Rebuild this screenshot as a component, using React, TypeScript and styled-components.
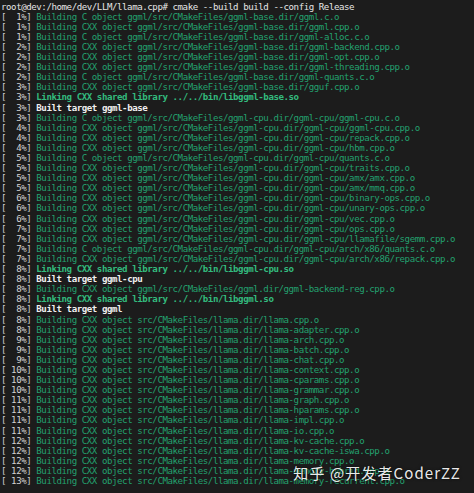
import React from "react";
import styled, { createGlobalStyle } from "styled-components";

const Global = createGlobalStyle`
  html, body {
    margin: 0;
    padding: 0;
    background: #1c1c1c;
  }
  #root {
    width: 474px;
    height: 493px;
    overflow: hidden;
  }
`;

type Kind = "prompt" | "build" | "link" | "done";

const Terminal = styled.div`
  position: relative;
  width: 474px;
  height: 493px;
  background: #1c1c1c;
  padding: 1.6px 0 0 1px;
  box-sizing: border-box;
  overflow: hidden;
  font-family: "DejaVu Sans Mono", "Liberation Mono", monospace;
  font-size: 9.1px;
  letter-spacing: -0.43px;
`;

const Row = styled.div`
  display: flex;
  height: 10.1px;
  line-height: 10.1px;
  white-space: pre;
`;

const Progress = styled.span`
  color: #d2d2d2;
`;

const Message = styled.span<{ $kind: Kind }>`
  color: ${(p) =>
    p.$kind === "build"
      ? "#23a16f"
      : p.$kind === "link"
      ? "#33bb7e"
      : p.$kind === "done"
      ? "#f0f0f0"
      : "#e6e6e6"};
  font-weight: ${(p) => (p.$kind === "link" || p.$kind === "done" ? 700 : 400)};
`;

const Watermark = styled.div`
  position: absolute;
  top: 464px;
  right: 13px;
  line-height: 18px;
  font-family: "Noto Sans CJK SC", "Noto Sans", sans-serif;
  font-size: 15px;
  letter-spacing: 1.1px;
  color: rgba(255, 255, 255, 0.93);
  text-shadow: 0 0 3px rgba(0, 0, 0, 0.7);
  white-space: pre;
`;

type Line = [string, Kind, string];

const B = "Building CXX object ";
const C = "Building C object ";
const base = "ggml/src/CMakeFiles/ggml-base.dir/";
const cpu = "ggml/src/CMakeFiles/ggml-cpu.dir/ggml-cpu/";
const ll = "src/CMakeFiles/llama.dir/";

const lines: Line[] = [
  ["  1%", "build", C + base + "ggml.c.o"],
  ["  1%", "build", B + base + "ggml.cpp.o"],
  ["  1%", "build", C + base + "ggml-alloc.c.o"],
  ["  2%", "build", B + base + "ggml-backend.cpp.o"],
  ["  2%", "build", B + base + "ggml-opt.cpp.o"],
  ["  2%", "build", B + base + "ggml-threading.cpp.o"],
  ["  2%", "build", C + base + "ggml-quants.c.o"],
  ["  3%", "build", B + base + "gguf.cpp.o"],
  ["  3%", "link", "Linking CXX shared library ../../bin/libggml-base.so"],
  ["  3%", "done", "Built target ggml-base"],
  ["  3%", "build", C + cpu + "ggml-cpu.c.o"],
  ["  4%", "build", B + cpu + "ggml-cpu.cpp.o"],
  ["  4%", "build", B + cpu + "repack.cpp.o"],
  ["  4%", "build", B + cpu + "hbm.cpp.o"],
  ["  5%", "build", C + cpu + "quants.c.o"],
  ["  5%", "build", B + cpu + "traits.cpp.o"],
  ["  5%", "build", B + cpu + "amx/amx.cpp.o"],
  ["  5%", "build", B + cpu + "amx/mmq.cpp.o"],
  ["  6%", "build", B + cpu + "binary-ops.cpp.o"],
  ["  6%", "build", B + cpu + "unary-ops.cpp.o"],
  ["  6%", "build", B + cpu + "vec.cpp.o"],
  ["  7%", "build", B + cpu + "ops.cpp.o"],
  ["  7%", "build", B + cpu + "llamafile/sgemm.cpp.o"],
  ["  7%", "build", C + cpu + "arch/x86/quants.c.o"],
  ["  7%", "build", B + cpu + "arch/x86/repack.cpp.o"],
  ["  8%", "link", "Linking CXX shared library ../../bin/libggml-cpu.so"],
  ["  8%", "done", "Built target ggml-cpu"],
  ["  8%", "build", B + "ggml/src/CMakeFiles/ggml.dir/ggml-backend-reg.cpp.o"],
  ["  8%", "link", "Linking CXX shared library ../../bin/libggml.so"],
  ["  8%", "done", "Built target ggml"],
  ["  8%", "build", B + ll + "llama.cpp.o"],
  ["  8%", "build", B + ll + "llama-adapter.cpp.o"],
  ["  9%", "build", B + ll + "llama-arch.cpp.o"],
  ["  9%", "build", B + ll + "llama-batch.cpp.o"],
  ["  9%", "build", B + ll + "llama-chat.cpp.o"],
  [" 10%", "build", B + ll + "llama-context.cpp.o"],
  [" 10%", "build", B + ll + "llama-cparams.cpp.o"],
  [" 10%", "build", B + ll + "llama-grammar.cpp.o"],
  [" 11%", "build", B + ll + "llama-graph.cpp.o"],
  [" 11%", "build", B + ll + "llama-hparams.cpp.o"],
  [" 11%", "build", B + ll + "llama-impl.cpp.o"],
  [" 11%", "build", B + ll + "llama-io.cpp.o"],
  [" 12%", "build", B + ll + "llama-kv-cache.cpp.o"],
  [" 12%", "build", B + ll + "llama-kv-cache-iswa.cpp.o"],
  [" 12%", "build", B + ll + "llama-memory.cpp.o"],
  [" 12%", "build", B + ll + "llama-memory-hybrid.cpp.o"],
  [" 13%", "build", B + ll + "llama-memory-recurrent.cpp.o"],
];

export default function App() {
  return (
    <>
      <Global />
      <Terminal>
        <Row>
          <Message $kind="prompt">
            root@dev:/home/dev/LLM/llama.cpp# cmake --build build --config Release
          </Message>
        </Row>
        {lines.map(([pct, kind, text], i) => (
          <Row key={i}>
            <Progress>{`[${pct}] `}</Progress>
            <Message $kind={kind}>{text}</Message>
          </Row>
        ))}
        <Watermark>知乎 @开发者CoderZZ</Watermark>
      </Terminal>
    </>
  );
}
